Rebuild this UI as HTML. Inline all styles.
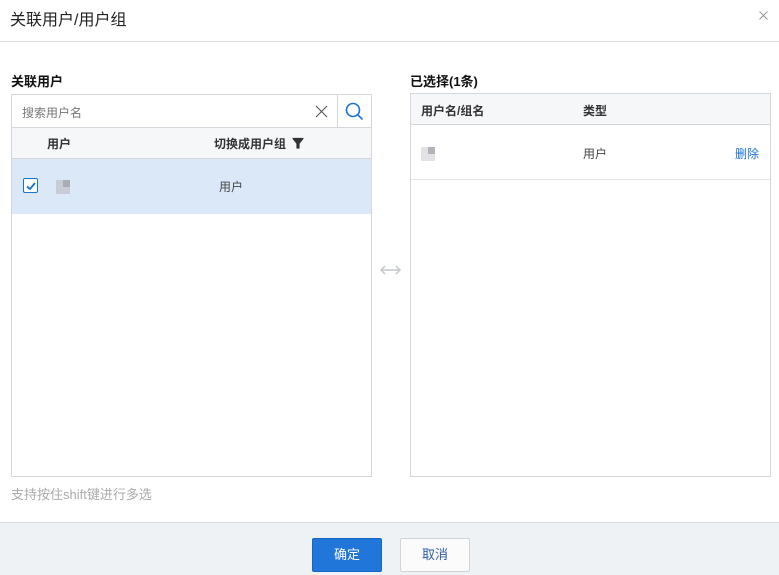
<!DOCTYPE html>
<html><head><meta charset="utf-8"><style>
*{box-sizing:border-box;margin:0;padding:0}
body{width:779px;height:575px;background:#fff;font-family:"Liberation Sans","Noto Sans CJK SC",sans-serif;color:#333;position:relative;overflow:hidden;font-size:12px}
.abs{position:absolute}
.title{left:10px;top:6px;font-size:16px;color:#222}
.hline{left:0;top:41px;width:779px;height:1px;background:#dcdfe3}
.lbl{font-size:13px;font-weight:bold;color:#111}
.box{border:1px solid #d4d7dc;background:#fff}
.th{background:#f6f7f9;border-bottom:1px solid #d4d7dc;font-weight:bold;color:#333}
</style></head><body>
<div class="abs title">关联用户/用户组</div>
<svg class="abs" style="left:759px;top:11px" width="9" height="9" viewBox="0 0 9 9"><path d="M0.5 0.5L8.5 8.5M8.5 0.5L0.5 8.5" stroke="#999" stroke-width="1.1"/></svg>
<div class="abs hline"></div>

<div class="abs lbl" style="left:11px;top:71px">关联用户</div>
<div class="abs box" style="left:11px;top:94px;width:361px;height:383px">
  <div style="height:33px;border-bottom:1px solid #d4d7dc;position:relative">
    <span class="abs" style="left:10px;top:9px;color:#777;font-size:12px">搜索用户名</span>
    <svg class="abs" style="left:303px;top:10px" width="13" height="13" viewBox="0 0 13 13"><path d="M1 1L12 12M12 1L1 12" stroke="#555" stroke-width="1.1"/></svg>
    <div class="abs" style="left:325px;top:0;width:1px;height:32px;background:#d4d7dc"></div>
    <svg class="abs" style="left:333px;top:7px" width="19" height="19" viewBox="0 0 19 19"><circle cx="8" cy="8" r="6.5" fill="none" stroke="#1a73d0" stroke-width="1.6"/><path d="M12.7 12.7L17.5 17.5" stroke="#1a73d0" stroke-width="1.6"/></svg>
  </div>
  <div class="th" style="height:31px;position:relative">
    <span class="abs" style="left:35px;top:7px">用户</span>
    <span class="abs" style="left:202px;top:7px">切换成用户组</span>
    <svg class="abs" style="left:280px;top:9px" width="12" height="12" viewBox="0 0 12 12"><path d="M1 1.5H11L7 6.5V11H5V6.5Z" fill="#333" stroke="#333" stroke-width="1.2" stroke-linejoin="round"/></svg>
  </div>
  <div style="height:55px;background:#dbe8f8;position:relative">
    <div class="abs" style="left:11px;top:19px;width:15px;height:15px;border:1px solid #1a73d0;border-radius:2px;background:#fff"></div>
    <svg class="abs" style="left:13px;top:21px" width="12" height="12" viewBox="0 0 12 12"><path d="M2 6.5L5 9L10 3" fill="none" stroke="#1a73d0" stroke-width="1.8"/></svg>
    <div class="abs" style="left:44px;top:21px;width:14px;height:14px;background:#c7ccd6"></div>
    <div class="abs" style="left:51px;top:21px;width:7px;height:7px;background:#a9acb6"></div>
    <span class="abs" style="left:207px;top:19px;color:#444">用户</span>
  </div>
</div>
<div class="abs" style="left:11px;top:484px;color:#aaa;font-size:13px">支持按住shift键进行多选</div>

<svg class="abs" style="left:380px;top:264px" width="21" height="12" viewBox="0 0 21 12"><path d="M1 6H20M5 2L1 6L5 10M16 2L20 6L16 10" fill="none" stroke="#c4c7cc" stroke-width="1.5"/></svg>

<div class="abs lbl" style="left:410px;top:71px">已选择(1条)</div>
<div class="abs box" style="left:410px;top:93px;width:361px;height:384px">
  <div class="th" style="height:31px;position:relative;font-weight:normal">
    <span class="abs" style="left:10px;top:8px;font-weight:bold">用户名/组名</span>
    <span class="abs" style="left:172px;top:8px;font-weight:bold">类型</span>
  </div>
  <div style="height:55px;border-bottom:1px solid #e3e5e8;position:relative">
    <div class="abs" style="left:10px;top:22px;width:14px;height:14px;background:#e3e3e6"></div>
    <div class="abs" style="left:17px;top:22px;width:7px;height:7px;background:#b3b3ba"></div>
    <span class="abs" style="left:172px;top:20px;color:#444">用户</span>
    <span class="abs" style="left:324px;top:20px;color:#1a73d0">删除</span>
  </div>
</div>

<div class="abs" style="left:0;top:522px;width:779px;height:53px;background:#eef2f5;border-top:1px solid #d9dde2"></div>
<div class="abs" style="left:312px;top:538px;width:70px;height:34px;background:#2176d9;border:1px solid #1466c2;border-radius:2px;color:#fff;text-align:center;line-height:32px;font-size:13px">确定</div>
<div class="abs" style="left:400px;top:538px;width:70px;height:34px;background:#fbfbfb;border:1px solid #d0d3d8;border-radius:2px;color:#2d5aa8;text-align:center;line-height:32px;font-size:13px">取消</div>
</body></html>
